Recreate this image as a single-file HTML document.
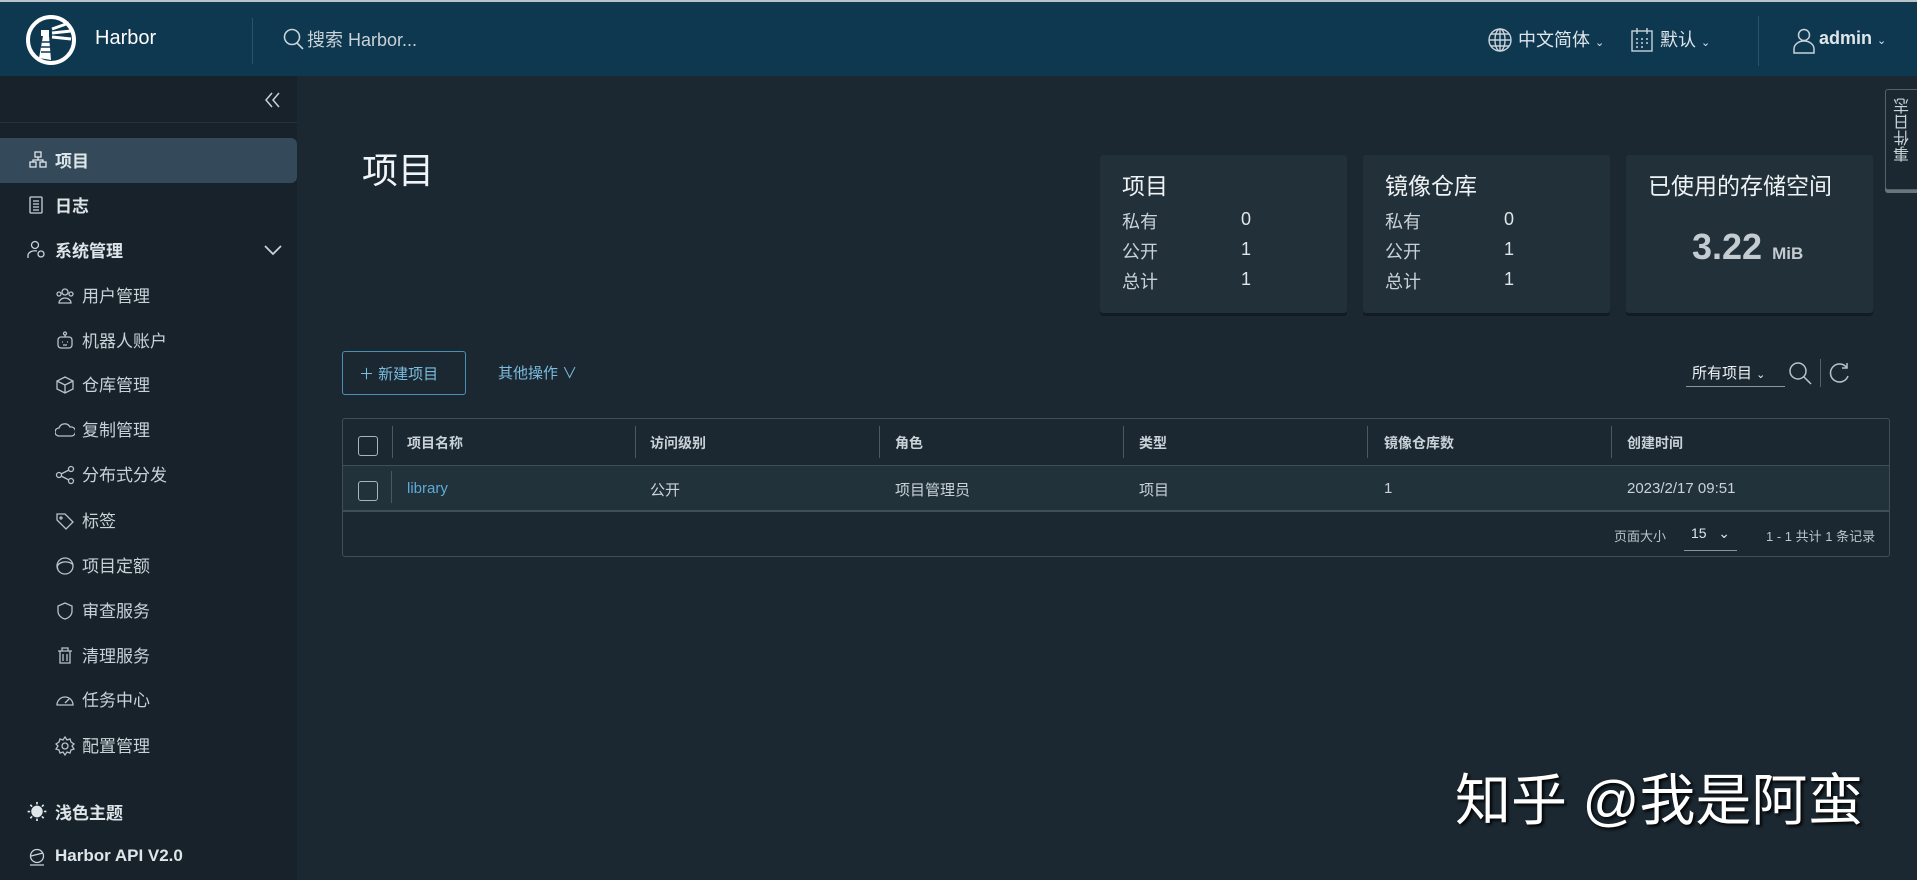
<!DOCTYPE html>
<html><head><meta charset="utf-8"><style>
*{margin:0;padding:0;box-sizing:border-box}
body{width:1917px;height:880px;overflow:hidden;background:#1b2831;font-family:"Liberation Sans","Noto Sans CJK SC",sans-serif;color:#e8eef2;position:relative}
.abs{position:absolute}
#hdr{left:0;top:0;width:1917px;height:76px;background:#0e3750;border-top:2px solid #b9c3c8}
#side{left:0;top:76px;width:297px;height:804px;background:#17222a}
.mi{position:absolute;left:0;font-size:17px;color:#dfe6ea;white-space:nowrap}
.mi.top{left:55px;font-weight:bold}
.mi.sub{left:82px;color:#c9d2d8}
.ic{position:absolute}
.card{position:absolute;top:155px;width:247px;height:158px;background:#223139;border-radius:3px;box-shadow:0 3px 0 #121b20}
.card .t{position:absolute;left:22px;top:12px;font-size:23px;color:#eef2f4}
.card .r{position:absolute;left:22px;font-size:18px;color:#c9d2d8}
.card .v{position:absolute;left:141px;font-size:18px;color:#dfe6ea}
.th{position:absolute;top:14px;font-size:14px;font-weight:bold;color:#c9d2d8}
.td{position:absolute;top:14px;font-size:15px;color:#c9d2d8}
.sep{position:absolute;top:7px;width:1px;height:32px;background:#4a5a63}
.cb{position:absolute;left:15px;width:20px;height:20px;border:1px solid #aab4ba;border-radius:3px}
</style></head><body>
<div id="hdr" class="abs">
 <svg class="abs" style="left:25px;top:12px" width="52" height="52" viewBox="0 0 52 52"><circle cx="26" cy="26" r="23" fill="#0e3750" stroke="#fff" stroke-width="4"/><path d="M14 44 L18 22 L24 22 L26 46 Z" fill="#fff"/><rect x="16" y="16" width="8" height="6" fill="#fff"/><path d="M27 15 L44 9 M27 19 L46 17 M27 23 L46 25" stroke="#fff" stroke-width="3"/><path d="M17 28h8M16 33h9M16 38h10" stroke="#0e3750" stroke-width="1.5"/></svg>
 <div class="abs" style="left:95px;top:25px;font-size:20px;color:#fff">Harbor</div>
 <div class="abs" style="left:252px;top:16px;width:1px;height:46px;background:#2c5268"></div>
 <svg class="abs" style="left:283px;top:26px" width="22" height="24" viewBox="0 0 22 24"><circle cx="9" cy="9" r="7.5" fill="none" stroke="#c9d2d8" stroke-width="1.6"/><path d="M14 15l6 6" stroke="#c9d2d8" stroke-width="1.6"/></svg>
 <div class="abs" style="left:307px;top:24px;font-size:18px;color:#c9d2d8">搜索 Harbor...</div>
 <svg class="abs" style="left:1487px;top:25px" width="26" height="26" viewBox="0 0 26 26" fill="none" stroke="#c9d2d8" stroke-width="1.4"><circle cx="13" cy="13" r="11"/><ellipse cx="13" cy="13" rx="5" ry="11"/><path d="M2 13h22M4 7h18M4 19h18M13 2v22"/></svg>
 <div class="abs" style="left:1518px;top:24px;font-size:18px;color:#dfe6ea">中文简体 <span style="font-size:11px">⌄</span></div>
 <svg class="abs" style="left:1630px;top:25px" width="24" height="26" viewBox="0 0 24 26" fill="none" stroke="#c9d2d8" stroke-width="1.4"><rect x="2" y="4" width="20" height="20"/><path d="M7 1v6M17 1v6M6 12h2M11 12h2M16 12h2M6 16h2M11 16h2M16 16h2M6 20h2M11 20h2"/></svg>
 <div class="abs" style="left:1660px;top:24px;font-size:18px;color:#dfe6ea">默认 <span style="font-size:11px">⌄</span></div>
 <div class="abs" style="left:1758px;top:14px;width:1px;height:50px;background:#2c5268"></div>
 <svg class="abs" style="left:1792px;top:25px" width="24" height="28" viewBox="0 0 24 28" fill="none" stroke="#c9d2d8" stroke-width="1.5"><circle cx="12" cy="8" r="5.5"/><path d="M2 26v-4a10 8 0 0 1 20 0v4z"/></svg>
 <div class="abs" style="left:1819px;top:26px;font-size:18px;font-weight:bold;color:#dfe6ea">admin <span style="font-size:11px;font-weight:normal">⌄</span></div>
</div>
<div id="side" class="abs">
 <svg class="abs" style="left:263px;top:14px" width="20" height="20" viewBox="0 0 20 20" fill="none" stroke="#c9d2d8" stroke-width="1.5"><path d="M9 3L3 10l6 7M16 3l-6 7 6 7"/></svg>
 <div class="abs" style="left:0;top:46px;width:297px;height:1px;background:#25323a"></div>
 <div class="abs" style="left:0;top:62px;width:297px;height:45px;background:#34495a;border-radius:0 6px 6px 0"></div>
</div>
<div class="mi top" style="top:147px">项目</div>
<svg class="ic" style="left:29px;top:151px" width="18" height="18" viewBox="0 0 18 18" fill="none" stroke="#dfe6ea" stroke-width="1.3"><rect x="6" y="1" width="6" height="5"/><rect x="1" y="11" width="6" height="5"/><rect x="11" y="11" width="6" height="5"/><path d="M9 6v3M4 11V9h10v2"/></svg>
<div class="mi top" style="top:192px">日志</div>
<svg class="ic" style="left:29px;top:196px" width="14" height="18" viewBox="0 0 14 18" fill="none" stroke="#c9d2d8" stroke-width="1.3"><rect x="1" y="1" width="12" height="16" rx="1"/><path d="M4 5h6M4 8h6M4 11h6M4 14h6"/></svg>
<div class="mi top" style="top:237px">系统管理</div>
<svg class="ic" style="left:27px;top:240px" width="20" height="20" viewBox="0 0 20 20" fill="none" stroke="#c9d2d8" stroke-width="1.3"><circle cx="8" cy="5" r="3.5"/><path d="M1 18v-3a7 5 0 0 1 9-4"/><circle cx="14" cy="14" r="3"/></svg>
<svg class="ic" style="left:263px;top:243px" width="20" height="14" viewBox="0 0 20 14" fill="none" stroke="#c9d2d8" stroke-width="1.8"><path d="M2 3l8 8 8-8"/></svg>
<div class="mi sub" style="top:282px">用户管理</div>
<div class="mi sub" style="top:327px">机器人账户</div>
<div class="mi sub" style="top:371px">仓库管理</div>
<div class="mi sub" style="top:416px">复制管理</div>
<div class="mi sub" style="top:461px">分布式分发</div>
<div class="mi sub" style="top:507px">标签</div>
<div class="mi sub" style="top:552px">项目定额</div>
<div class="mi sub" style="top:597px">审查服务</div>
<div class="mi sub" style="top:642px">清理服务</div>
<div class="mi sub" style="top:686px">任务中心</div>
<div class="mi sub" style="top:732px">配置管理</div>
<svg class="ic" style="left:55px;top:286px" width="20" height="480" viewBox="0 0 20 480" fill="none" stroke="#b9c3c8" stroke-width="1.3">
 <circle cx="10" cy="6" r="3"/><circle cx="4" cy="8" r="2"/><circle cx="16" cy="8" r="2"/><path d="M4 17a6 5 0 0 1 12 0z"/>
 <g transform="translate(0,45)"><rect x="3" y="6" width="14" height="11" rx="3"/><circle cx="10" cy="2.5" r="1.5"/><path d="M10 4v2M7 11h1M12 11h1M8 14h4"/></g>
 <g transform="translate(0,89)"><path d="M10 2l8 4v8l-8 4-8-4V6z M2 6l8 4 8-4 M10 10v8"/></g>
 <g transform="translate(0,134)"><path d="M4 16a4 4 0 0 1 0-8 6 6 0 0 1 11-1 4.5 4.5 0 0 1 2 9z"/></g>
 <g transform="translate(0,179)"><circle cx="4" cy="10" r="2.5"/><circle cx="16" cy="4" r="2.5"/><circle cx="16" cy="16" r="2.5"/><path d="M6 9l8-4M6 11l8 4"/></g>
 <g transform="translate(0,225)"><path d="M2 3h8l8 8-7 7-9-9z"/><circle cx="6" cy="7" r="1"/></g>
 <g transform="translate(0,270)"><circle cx="10" cy="10" r="8"/><path d="M3 13a8 5 0 0 1 15-4"/></g>
 <g transform="translate(0,315)"><path d="M10 2l7 3v5c0 4-3 7-7 8-4-1-7-4-7-8V5z"/></g>
 <g transform="translate(0,360)"><path d="M3 5h14M7 5V2h6v3M5 5v12h10V5M8 8v7M12 8v7"/></g>
 <g transform="translate(0,404)"><path d="M2 15a8 8 0 1 1 16 0z"/><path d="M10 13l4-4"/></g>
 <g transform="translate(0,450)"><circle cx="10" cy="10" r="3"/><path d="M10 1l2 3 3-1 1 3 3 2-2 2 2 3-3 1-1 3-3-1-2 3-2-3-3 1-1-3-3-1 2-3-2-2 3-2 1-3 3 1z"/></g>
</svg>
<div class="mi top" style="top:799px">浅色主题</div>
<div class="ic" style="left:27px;top:796px;font-size:20px;color:#dfe6ea">☀</div>
<div class="mi top" style="top:846px">Harbor API V2.0</div>
<svg class="ic" style="left:28px;top:848px" width="18" height="18" viewBox="0 0 18 18" fill="none" stroke="#c9d2d8" stroke-width="1.3"><circle cx="9" cy="8" r="6.5"/><path d="M3 8l12-3M2 17h14"/></svg>

<div class="abs" style="left:362px;top:142px;font-size:36px;color:#f2f5f7">项目</div>
<div class="card" style="left:1100px"><div class="t">项目</div><div class="r" style="top:53px">私有</div><div class="v" style="top:54px">0</div><div class="r" style="top:83px">公开</div><div class="v" style="top:84px">1</div><div class="r" style="top:113px">总计</div><div class="v" style="top:114px">1</div></div>
<div class="card" style="left:1363px"><div class="t">镜像仓库</div><div class="r" style="top:53px">私有</div><div class="v" style="top:54px">0</div><div class="r" style="top:83px">公开</div><div class="v" style="top:84px">1</div><div class="r" style="top:113px">总计</div><div class="v" style="top:114px">1</div></div>
<div class="card" style="left:1626px"><div class="t">已使用的存储空间</div><div style="position:absolute;left:66px;top:71px;font-size:36px;font-weight:bold;color:#c4ccd2">3.22 <span style="font-size:17px">MiB</span></div></div>
<div class="abs" style="left:1885px;top:89px;width:34px;height:101px;background:#1b2831;border:1px solid #55626a;border-right:none;box-shadow:0 3px 0 #6a767c;border-radius:3px 0 0 3px"><div style="writing-mode:vertical-rl;font-size:16px;color:#c9d2d8;margin:8px 0 0 6px;transform:rotate(180deg)">事件日志</div></div>

<div class="abs" style="left:342px;top:351px;width:124px;height:44px;border:1px solid #4a90b5;border-radius:3px;color:#7bbde0;font-size:15px;padding:11px 0 0 16px">＋ 新建项目</div>
<div class="abs" style="left:498px;top:362px;font-size:15px;color:#7bbde0">其他操作 ∨</div>
<div class="abs" style="left:1692px;top:362px;font-size:15px;color:#eef2f4">所有项目 <span style="font-size:11px">⌄</span></div>
<div class="abs" style="left:1686px;top:386px;width:99px;height:1px;background:#8a969d"></div>
<svg class="abs" style="left:1788px;top:361px" width="26" height="26" viewBox="0 0 26 26" fill="none" stroke="#b9c3c8" stroke-width="1.5"><circle cx="10" cy="10" r="8"/><path d="M16 16l7 7"/></svg>
<div class="abs" style="left:1820px;top:359px;width:1px;height:28px;background:#55626a"></div>
<svg class="abs" style="left:1828px;top:361px" width="24" height="24" viewBox="0 0 24 24" fill="none" stroke="#b9c3c8" stroke-width="1.5"><path d="M19 7a9 9 0 1 0 1 8M19 2v5h-5"/></svg>

<div class="abs" style="left:342px;top:418px;width:1548px;height:139px;border:1px solid #3f4e57;border-radius:3px">
 <div class="abs" style="left:0;top:46px;width:1546px;height:47px;background:#22323a;border-top:1px solid #3f4e57;border-bottom:2px solid #3f4e57"></div>
 <div class="cb" style="top:17px"></div>
 <div class="sep" style="left:49px"></div><div class="sep" style="left:292px"></div><div class="sep" style="left:536px"></div><div class="sep" style="left:780px"></div><div class="sep" style="left:1024px"></div><div class="sep" style="left:1268px"></div>
 <div class="th" style="left:64px">项目名称</div><div class="th" style="left:307px">访问级别</div><div class="th" style="left:552px">角色</div><div class="th" style="left:796px">类型</div><div class="th" style="left:1041px">镜像仓库数</div><div class="th" style="left:1284px">创建时间</div>
 <div class="abs" style="left:0;top:46px;width:1546px;height:47px">
  <div class="cb" style="top:16px"></div><div class="sep" style="left:48px;top:6px"></div>
  <div class="td" style="left:64px;top:15px;color:#5fa9d6">library</div><div class="td" style="left:307px">公开</div><div class="td" style="left:552px">项目管理员</div><div class="td" style="left:796px">项目</div><div class="td" style="left:1041px;top:15px">1</div><div class="td" style="left:1284px;top:15px">2023/2/17 09:51</div>
 </div>
 <div class="abs" style="left:1271px;top:107px;font-size:13px;color:#b9c3c8">页面大小</div>
 <div class="abs" style="left:1348px;top:106px;font-size:14px;color:#dfe6ea">15 &nbsp;&nbsp;⌄</div>
 <div class="abs" style="left:1341px;top:131px;width:53px;height:1px;background:#8a969d"></div>
 <div class="abs" style="left:1423px;top:107px;font-size:13px;color:#b9c3c8">1 - 1 共计 1 条记录</div>
</div>
<div class="abs" style="left:1455px;top:756px;font-size:56px;color:#fff;text-shadow:2px 2px 3px #000;white-space:nowrap">知乎 @我是阿蛮</div>
</body></html>
